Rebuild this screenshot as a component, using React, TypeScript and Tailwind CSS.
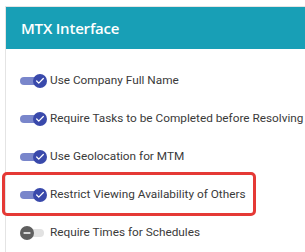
import { Check, Minus } from "lucide-react";

interface Setting {
  label: string;
  on: boolean;
  highlight?: boolean;
}

const settings: Setting[] = [
  { label: "Use Company Full Name", on: true },
  { label: "Require Tasks to be Completed before Resolving", on: true },
  { label: "Use Geolocation for MTM", on: true },
  { label: "Restrict Viewing Availability of Others", on: true, highlight: true },
  { label: "Require Times for Schedules", on: false },
];

function Toggle({ on }: { on: boolean }) {
  return (
    <span className="relative flex h-[14px] w-[27px] shrink-0 items-center">
      <span
        className={`h-[8px] w-[24px] rounded-full ${on ? "bg-[#7986cb]" : "bg-[#e2e2e2]"}`}
      />
      {on ? (
        <span className="absolute right-0 top-0 flex h-[14px] w-[14px] items-center justify-center rounded-full bg-[#3949ab]">
          <Check className="h-[10px] w-[10px] text-white" strokeWidth={3} />
        </span>
      ) : (
        <span className="absolute left-0 top-0 flex h-[14px] w-[14px] items-center justify-center rounded-full bg-[#5f5f5f]">
          <Minus className="h-[10px] w-[10px] text-white" strokeWidth={3.5} />
        </span>
      )}
    </span>
  );
}

export default function App() {
  return (
    <div className="h-[252px] w-full overflow-hidden bg-white pl-[5px] pt-[6px]">
      <div className="min-h-[260px] border-l border-t border-[#e4e4e4]">
        <div
          className="flex h-[42px] items-center bg-[#189fb6] pl-[15px] text-[15px] font-semibold tracking-[-0.2px] text-white"
          style={{ fontFamily: '"Open Sans", sans-serif' }}
        >
          MTX Interface
        </div>

        <div
          className="flex flex-col gap-[18px] pt-[22px] text-[11.8px] text-[#3a3a3a]"
          style={{ fontFamily: "Roboto, sans-serif" }}
        >
          {settings.map((s) => (
            <div key={s.label} className="relative flex h-5 items-center gap-[3px] pl-[14px]">
              <Toggle on={s.on} />
              <span className="whitespace-nowrap">{s.label}</span>
              {s.highlight && (
                <span className="absolute left-[-4px] top-[-13px] h-[44px] w-[254px] rounded-[5px] border-[3px] border-[#e53935]" />
              )}
            </div>
          ))}
        </div>
      </div>
    </div>
  );
}
